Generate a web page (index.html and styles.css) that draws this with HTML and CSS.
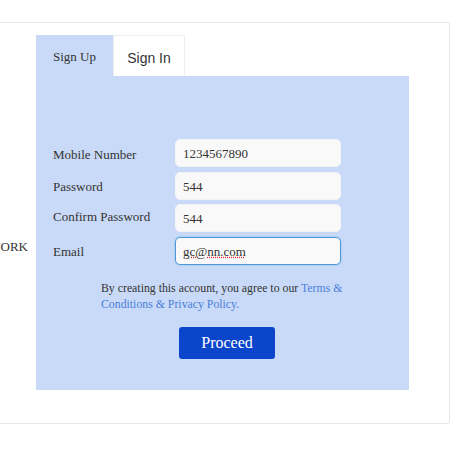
FILE: index.html
```html
<!DOCTYPE html>
<html lang="en">
<head>
    <meta charset="UTF-8">
    <meta name="viewport" content="width=device-width, initial-scale=1.0">
    <title>Sign Up</title>
    <link rel="stylesheet" href="styles.css">
</head>
<body>
    <div class="card">
        <div class="side">NETWORK</div>

        <div class="auth">
            <!-- Tabs -->
            <div class="tabs">
                <div class="tab active">Sign Up</div>
                <div class="tab plain">Sign In</div>
            </div>

            <!-- Sign up form -->
            <div class="panel">
                <div class="form">
                    <label for="mobile">Mobile Number</label>
                    <input type="text" id="mobile" value="1234567890">
                    <label for="pass">Password</label>
                    <input type="text" id="pass" value="544">
                    <label for="confirm" class="up">Confirm Password</label>
                    <input type="text" id="confirm" value="544">
                    <label for="email">Email</label>
                    <input type="text" id="email" class="focused" value="gc@nn.com">
                </div>
                <p class="terms">By creating this account, you agree to our <a href="#">Terms &amp;</a><br><a href="#">Conditions &amp; Privacy Policy.</a></p>
                <button class="proceed">Proceed</button>
            </div>
        </div>
    </div>
</body>
</html>
```

FILE: styles.css
```css
body {
    margin: 0;
    padding-top: 22px;
    background: #fff;
    font-family: "Liberation Serif", serif;
    color: #333;
}
.card {
    display: flex;
    width: 488px;
    height: 400px;
    margin-left: -40px;
    border: 1px solid #e6e6e6;
    border-radius: 3px;
}
.side {
    width: 67px;
    padding: 216px 8px 0 0;
    text-align: right;
    font-size: 13px;
    white-space: nowrap;
    overflow: hidden;
    direction: rtl;
}
.auth {
    margin-top: 12px;
    width: 373px;
}
.tabs {
    display: flex;
    height: 41px;
}
.tab {
    display: flex;
    align-items: center;
    justify-content: center;
    padding-top: 3px;
    box-sizing: border-box;
}
.active {
    width: 77px;
    background: #c9daf8;
    font-size: 13px;
}
.plain {
    width: 72px;
    background: #fff;
    border: 1px solid #eeeeee;
    border-bottom: none;
    font-family: "Liberation Sans", Arial, sans-serif;
    font-size: 14px;
    padding-top: 4px;
}
.panel {
    height: 314px;
    background: #c9daf8;
    padding-top: 63px;
    box-sizing: border-box;
}
.form {
    display: grid;
    grid-template-columns: 122px 166px;
    row-gap: 4.5px;
    padding-left: 17px;
    align-items: center;
}
label {
    font-size: 13px;
    padding-top: 3px;
}
label.up {
    padding-top: 0;
    margin-top: -3px;
}
input {
    height: 28px;
    box-sizing: border-box;
    padding: 2px 7px 0;
    border: 1px solid #f4f4f4;
    border-radius: 5px;
    background: #f9f9f9;
    font-family: "Liberation Serif", serif;
    font-size: 13px;
    color: #333;
    outline: none;
}
input.focused {
    border: 1px solid #4d9bd6;
    box-shadow: 0 0 2px rgba(77, 155, 214, 0.6);
    text-decoration: underline dotted #e0242b;
}
.terms {
    margin: 15px 0 0 65px;
    width: 256px;
    font-size: 11.8px;
    line-height: 16px;
}
.terms a {
    color: #4a7fd8;
    text-decoration: none;
}
.proceed {
    display: block;
    margin: 15px 0 0 143px;
    width: 96px;
    height: 32px;
    background: #0b45cc;
    color: #fff;
    border: none;
    border-radius: 3px;
    font-family: "Liberation Serif", serif;
    font-size: 16px;
    cursor: pointer;
}
```
